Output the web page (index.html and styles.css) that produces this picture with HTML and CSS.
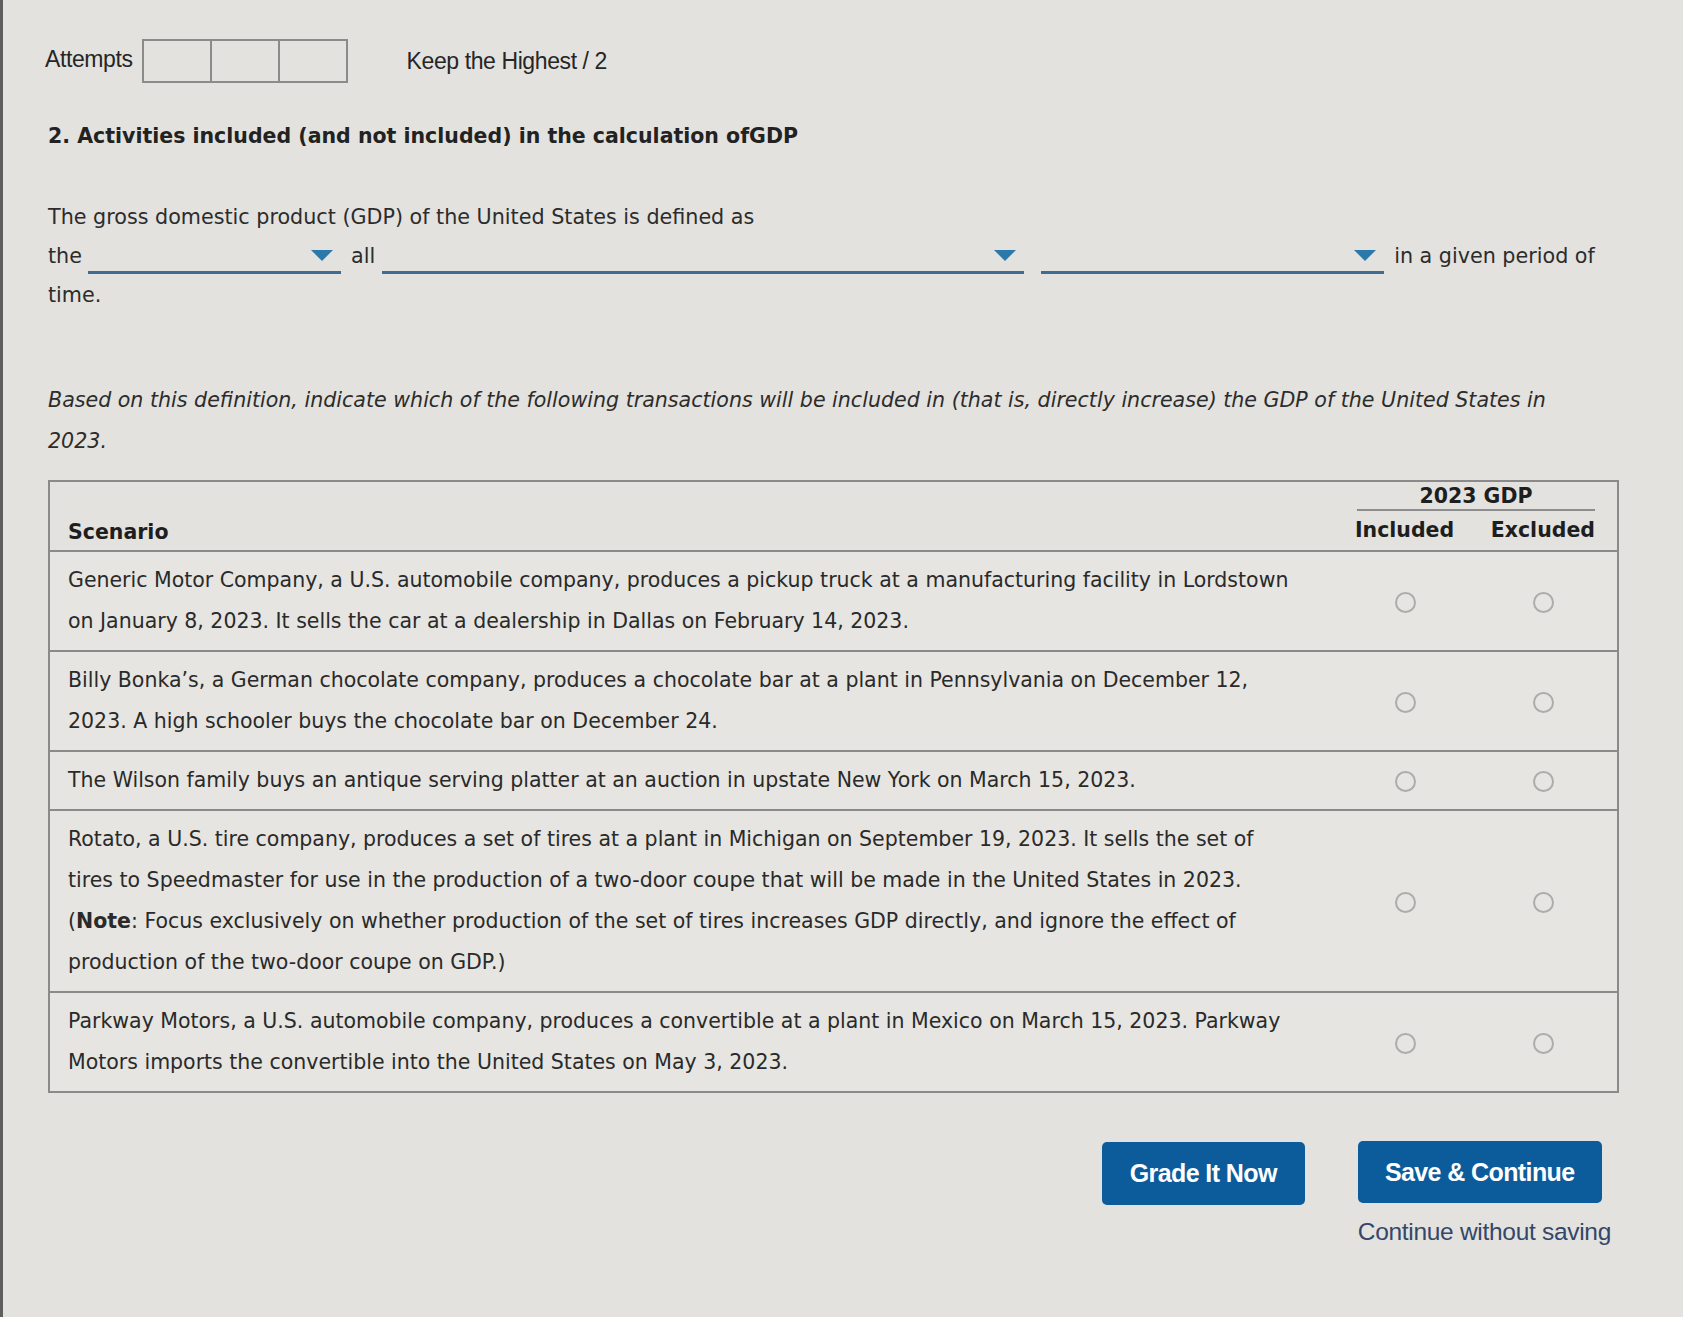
FILE: index.html
```html
<!DOCTYPE html>
<html lang="en">
<head>
<meta charset="utf-8">
<title>Activities included in GDP</title>
<link rel="stylesheet" href="styles.css">
</head>
<body>
<div class="page">
  <div class="attempts-row">
    <span class="attempts-label">Attempts</span>
    <div class="attempt-boxes">
      <span class="attempt-cell"></span>
      <span class="attempt-cell"></span>
      <span class="attempt-cell"></span>
    </div>
    <span class="keep-label">Keep the Highest / 2</span>
  </div>

  <h2 class="q-title">2. Activities included (and not included) in the calculation ofGDP</h2>

  <div class="definition">
    <div class="def-line">The gross domestic product (GDP) of the United States is defined as</div>
    <div class="def-line def-fill">
      <span>the</span>
      <span class="dropdown dd-1"><span class="arrow"></span></span>
      <span>all</span>
      <span class="dropdown dd-2"><span class="arrow"></span></span>
      <span class="dropdown dd-3"><span class="arrow"></span></span>
      <span>in a given period of</span>
    </div>
    <div class="def-line">time.</div>
  </div>

  <p class="instructions">Based on this definition, indicate which of the following transactions will be included in (that is, directly increase) the GDP of the United States in<br>2023.</p>

  <table class="gdp-table">
    <colgroup>
      <col class="col-scenario">
      <col class="col-inc">
      <col class="col-exc">
    </colgroup>
    <thead>
      <tr>
        <th rowspan="2" class="th-scenario">Scenario</th>
        <th colspan="2" class="th-group"><div class="group-label">2023 GDP</div></th>
      </tr>
      <tr>
        <th class="th-inc">Included</th>
        <th class="th-exc">Excluded</th>
      </tr>
    </thead>
    <tbody>
      <tr>
        <td class="scenario">Generic Motor Company, a U.S. automobile company, produces a pickup truck at a manufacturing facility in Lordstown<br>on January 8, 2023. It sells the car at a dealership in Dallas on February 14, 2023.</td>
        <td class="radio-cell"><span class="radio"></span></td>
        <td class="radio-cell"><span class="radio"></span></td>
      </tr>
      <tr>
        <td class="scenario">Billy Bonka’s, a German chocolate company, produces a chocolate bar at a plant in Pennsylvania on December 12,<br>2023. A high schooler buys the chocolate bar on December 24.</td>
        <td class="radio-cell"><span class="radio"></span></td>
        <td class="radio-cell"><span class="radio"></span></td>
      </tr>
      <tr>
        <td class="scenario">The Wilson family buys an antique serving platter at an auction in upstate New York on March 15, 2023.</td>
        <td class="radio-cell"><span class="radio"></span></td>
        <td class="radio-cell"><span class="radio"></span></td>
      </tr>
      <tr>
        <td class="scenario">Rotato, a U.S. tire company, produces a set of tires at a plant in Michigan on September 19, 2023. It sells the set of<br>tires to Speedmaster for use in the production of a two-door coupe that will be made in the United States in 2023.<br>(<strong>Note</strong>: Focus exclusively on whether production of the set of tires increases GDP directly, and ignore the effect of<br>production of the two-door coupe on GDP.)</td>
        <td class="radio-cell"><span class="radio"></span></td>
        <td class="radio-cell"><span class="radio"></span></td>
      </tr>
      <tr>
        <td class="scenario">Parkway Motors, a U.S. automobile company, produces a convertible at a plant in Mexico on March 15, 2023. Parkway<br>Motors imports the convertible into the United States on May 3, 2023.</td>
        <td class="radio-cell"><span class="radio"></span></td>
        <td class="radio-cell"><span class="radio"></span></td>
      </tr>
    </tbody>
  </table>

  <div class="actions">
    <button class="btn btn-grade">Grade It Now</button>
    <div class="save-group">
      <button class="btn btn-save">Save &amp; Continue</button>
      <a class="continue-link">Continue without saving</a>
    </div>
  </div>
</div>
</body>
</html>
```

FILE: styles.css
```css
html, body {
  margin: 0;
  padding: 0;
}
body {
  background: #e3e2de;
  color: #2c2c2c;
  font-family: "DejaVu Sans", Verdana, sans-serif;
  border-left: 3px solid #5e5e5e;
  min-height: 1317px;
  box-sizing: border-box;
}
.page {
  padding: 39px 0 0 42px;
  width: 1575px;
}

/* attempts row */
.attempts-row {
  display: flex;
  align-items: center;
  height: 44px;
  font-family: "Liberation Sans", Arial, sans-serif;
  font-size: 23px;
  color: #262626;
}
.attempts-label {
  margin-right: 9px;
  position: relative;
  top: -2px;
  letter-spacing: -0.4px;
}
.attempt-boxes {
  display: flex;
  border: 2px solid #8b8b8b;
  height: 44px;
  box-sizing: border-box;
}
.attempt-cell {
  width: 66px;
  height: 100%;
}
.attempt-cell + .attempt-cell {
  border-left: 2px solid #8b8b8b;
}
.keep-label {
  margin-left: 59px;
  letter-spacing: -0.4px;
}

/* question title */
.q-title {
  margin: 39px 0 0 3px;
  font-size: 20.5px;
  line-height: 28px;
  font-weight: bold;
  color: #222;
}

/* definition */
.definition {
  margin-top: 47px;
  margin-left: 3px;
  font-size: 20.7px;
  line-height: 40px;
}
.def-fill {
  display: flex;
  align-items: center;
  height: 38px;
}
.dropdown {
  display: inline-block;
  position: relative;
  height: 26px;
  border-bottom: 3px solid #3f6c93;
  box-sizing: border-box;
}
.dd-1 { width: 253px; margin: 10px 10px 0 6px; }
.dd-2 { width: 642px; margin: 10px 17px 0 7px; }
.dd-3 { width: 343px; margin: 10px 10px 0 0; }
.arrow {
  position: absolute;
  right: 8px;
  top: 2px;
  width: 0;
  height: 0;
  border-left: 11px solid transparent;
  border-right: 11px solid transparent;
  border-top: 11px solid #2b78aa;
}

/* instructions */
.instructions {
  margin: 65px 0 0 3px;
  font-size: 20.6px;
  line-height: 41px;
  font-style: italic;
}

/* table */
.gdp-table {
  margin: 18px 0 0 3px;
  width: 1571px;
  border-collapse: collapse;
  border: 2px solid #8a8a8a;
  font-size: 20.5px;
}
.col-scenario { width: 1293px; }
.col-inc { width: 130px; }
.col-exc { width: 148px; }
.gdp-table th {
  font-weight: bold;
  color: #1e1e1e;
  padding: 0;
  line-height: 25px;
}
.th-scenario {
  text-align: left;
  vertical-align: bottom;
  padding: 0 0 5px 18px !important;
  border-bottom: 2px solid #8a8a8a;
}
.th-group {
  padding: 2px 22px 0 16px !important;
  vertical-align: top;
}
.group-label {
  border-bottom: 2px solid #8d8d8d;
  text-align: center;
  line-height: 25px;
}
.th-inc, .th-exc {
  border-bottom: 2px solid #8a8a8a;
  vertical-align: top;
  padding-top: 7px !important;
  padding-bottom: 7px !important;
}
.th-inc { text-align: left; padding-left: 14px !important; }
.th-exc { text-align: right; padding-right: 22px !important; }

.gdp-table td {
  border-top: 2px solid #8a8a8a;
}
.scenario {
  padding: 8px 10px 8px 18px;
  line-height: 41px;
  color: #2a2a2a;
  background: #e6e5e1;
  white-space: nowrap;
}
.radio-cell {
  text-align: center;
  vertical-align: middle;
  background: #e6e5e1;
}
.radio {
  display: inline-block;
  width: 21px;
  height: 21px;
  border: 2px solid #acacac;
  border-radius: 50%;
  box-sizing: border-box;
  vertical-align: middle;
}

/* actions */
.actions {
  display: flex;
  justify-content: flex-end;
  align-items: flex-start;
  margin-top: 48px;
  padding-right: 9px;
}
.btn {
  background: #0c5c9c;
  color: #fff;
  border: none;
  border-radius: 5px;
  font-family: "Liberation Sans", Arial, sans-serif;
  font-weight: bold;
  font-size: 25px;
  letter-spacing: -0.6px;
  height: 63px;
  cursor: pointer;
}
.btn-grade {
  width: 203px;
  margin-top: 1px;
  margin-right: 53px;
}
.btn-save {
  width: 244px;
  height: 62px;
}
.save-group {
  display: flex;
  flex-direction: column;
  align-items: flex-start;
}
.continue-link {
  margin-top: 15px;
  font-family: "Liberation Sans", Arial, sans-serif;
  font-size: 24.5px;
  color: #33476a;
  letter-spacing: -0.3px;
}
```
